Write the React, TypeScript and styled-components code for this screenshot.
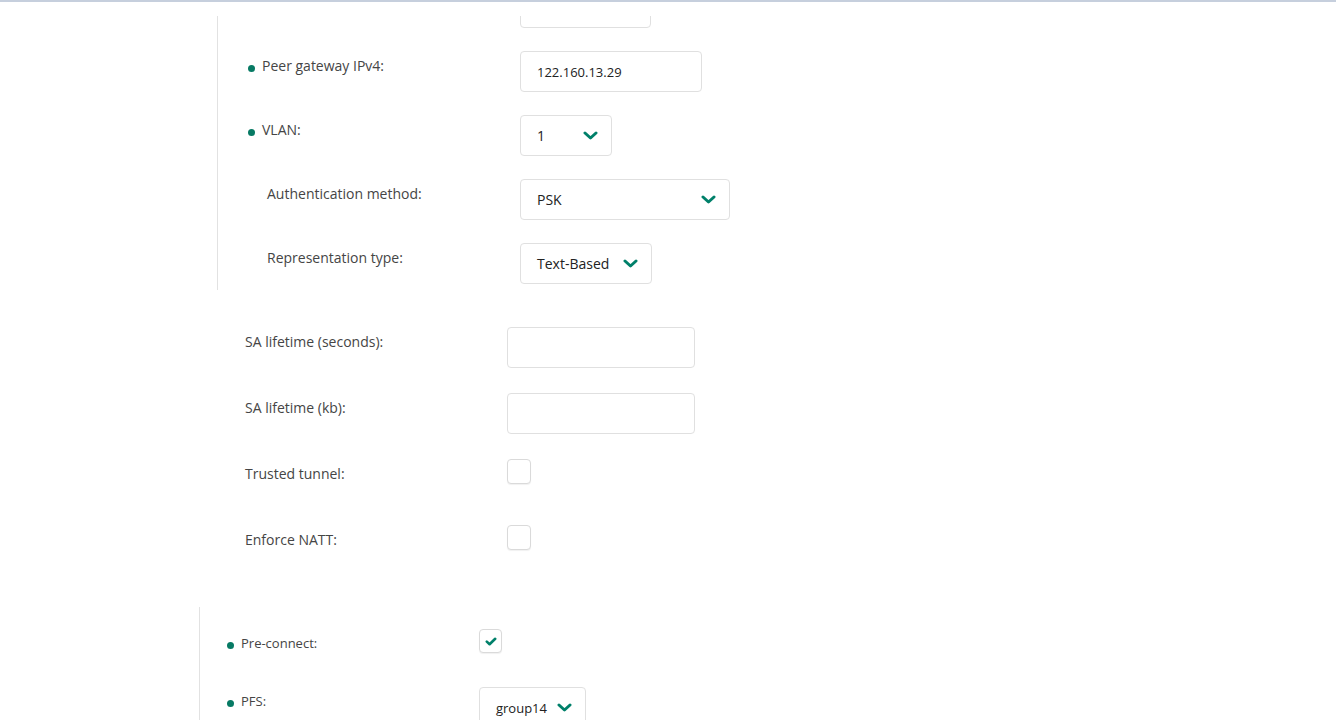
import React from "react";
import styled, { createGlobalStyle, css } from "styled-components";

const GlobalStyle = createGlobalStyle`
  html, body {
    margin: 0;
    padding: 0;
    background: #ffffff;
  }
  body {
    font-family: "Open Sans", "Liberation Sans", sans-serif;
    color: #404040;
  }
`;

const GREEN = "#00806a";

const Page = styled.div`
  height: 720px;
  box-sizing: border-box;
  border-top: 2px solid #c6cfdd;
  display: flex;
  flex-direction: column;
`;

const Viewport = styled.div`
  margin-top: 14px;
  flex: 1;
  overflow: hidden;
`;

// content is scrolled part way down the form
const Scrolled = styled.div`
  margin-top: -40px;
  display: flex;
  flex-direction: column;
`;

const Row = styled.div`
  display: flex;
  align-items: flex-start;
`;

const Section = styled.section<{
  $left: number;
  $bordered?: boolean;
  $padLeft?: number;
  $padTop?: number;
  $padBottom?: number;
  $top?: number;
  $pitch: number;
}>`
  margin-left: ${(p) => p.$left}px;
  margin-top: ${(p) => p.$top ?? 0}px;
  padding: ${(p) => p.$padTop ?? 0}px 0 ${(p) => p.$padBottom ?? 0}px
    ${(p) => p.$padLeft ?? 0}px;
  ${(p) =>
    p.$bordered &&
    css`
      border-left: 1px solid #e2e2e2;
    `}
  display: flex;
  flex-direction: column;

  & > ${Row} {
    min-height: ${(p) => p.$pitch}px;
  }
  & > ${Row}:last-child {
    min-height: 0;
  }
`;

const Label = styled.div<{ $width: number; $indent?: number; $size?: number; $shift?: number }>`
  width: ${(p) => p.$width}px;
  flex-shrink: 0;
  box-sizing: border-box;
  padding-left: ${(p) => p.$indent ?? 0}px;
  margin-top: ${(p) => p.$shift ?? 5}px;
  font-size: ${(p) => p.$size ?? 14}px;
  line-height: 20px;
  color: #454545;
  white-space: nowrap;
`;

const Dot = styled.span`
  display: inline-block;
  width: 7px;
  height: 7px;
  border-radius: 50%;
  background: #077a64;
  margin-right: 7px;
  vertical-align: -1px;
`;

const TextField = styled.input<{ $width: number }>`
  width: ${(p) => p.$width}px;
  height: 41px;
  box-sizing: border-box;
  border: 1px solid #e0e0e0;
  border-radius: 4px;
  padding: 0 16px;
  font-family: inherit;
  font-size: 13px;
  color: #222;
  background: #fff;
  outline: none;
`;

const SelectBox = styled.div<{ $width: number; $size?: number }>`
  width: ${(p) => p.$width}px;
  height: 41px;
  box-sizing: border-box;
  border: 1px solid #e0e0e0;
  border-radius: 4px;
  padding: 0 13px 0 16px;
  display: flex;
  align-items: center;
  justify-content: space-between;
  font-size: ${(p) => p.$size ?? 14}px;
  color: #222;
  background: #fff;
  cursor: pointer;
`;

const CheckBox = styled.span<{ $size?: number }>`
  width: ${(p) => p.$size ?? 24}px;
  height: ${(p) => (p.$size ?? 24) + 1}px;
  box-sizing: border-box;
  border: 1px solid #dadada;
  border-radius: 4px;
  box-shadow: 0 1px 1px rgba(0, 0, 0, 0.06);
  display: flex;
  align-items: center;
  justify-content: center;
  background: #fff;
`;

const Chevron = () => (
  <svg width="15" height="9" viewBox="0 0 15 9" aria-hidden="true">
    <path d="M2 2 L7.5 7 L13 2" fill="none" stroke={GREEN} strokeWidth="3" strokeLinecap="round" strokeLinejoin="round" />
  </svg>
);

const Check = () => (
  <svg width="12" height="9" viewBox="0 0 12 9" aria-hidden="true">
    <path d="M1.8 4.6 L4.6 7.2 L10.2 1.8" fill="none" stroke={GREEN} strokeWidth="2.6" strokeLinecap="round" strokeLinejoin="round" />
  </svg>
);

const Select = ({ value, width, size }: { value: string; width: number; size?: number }) => (
  <SelectBox $width={width} $size={size}>
    <span>{value}</span>
    <Chevron />
  </SelectBox>
);

export default function App() {
  return (
    <>
      <GlobalStyle />
      <Page>
        <Viewport>
          <Scrolled>
            <Section $left={217} $bordered $padLeft={30} $padTop={11} $padBottom={6} $pitch={64}>
              <Row>
                <Label $width={272} />
                <TextField $width={131} readOnly defaultValue="" />
              </Row>
              <Row>
                <Label $width={272}>
                  <Dot />
                  Peer gateway IPv4:
                </Label>
                <TextField $width={182} readOnly defaultValue="122.160.13.29" />
              </Row>
              <Row>
                <Label $width={272}>
                  <Dot />
                  VLAN:
                </Label>
                <Select value="1" width={92} />
              </Row>
              <Row>
                <Label $width={272} $indent={19}>
                  Authentication method:
                </Label>
                <Select value="PSK" width={210} />
              </Row>
              <Row>
                <Label $width={272} $indent={19}>
                  Representation type:
                </Label>
                <Select value="Text-Based" width={132} />
              </Row>
            </Section>

            <Section $left={245} $top={37} $pitch={66}>
              <Row>
                <Label $width={262}>SA lifetime (seconds):</Label>
                <TextField $width={188} readOnly defaultValue="" />
              </Row>
              <Row>
                <Label $width={262}>SA lifetime (kb):</Label>
                <TextField $width={188} readOnly defaultValue="" />
              </Row>
              <Row>
                <Label $width={262}>Trusted tunnel:</Label>
                <CheckBox />
              </Row>
              <Row>
                <Label $width={262}>Enforce NATT:</Label>
                <CheckBox />
              </Row>
            </Section>

            <Section $left={199} $bordered $padLeft={27} $top={57} $padTop={22} $pitch={58}>
              <Row>
                <Label $width={252} $size={13} $shift={4}>
                  <Dot />
                  Pre-connect:
                </Label>
                <CheckBox $size={23}>
                  <Check />
                </CheckBox>
              </Row>
              <Row>
                <Label $width={252} $size={13} $shift={4}>
                  <Dot />
                  PFS:
                </Label>
                <Select value="group14" width={107} size={13} />
              </Row>
            </Section>
          </Scrolled>
        </Viewport>
      </Page>
    </>
  );
}
